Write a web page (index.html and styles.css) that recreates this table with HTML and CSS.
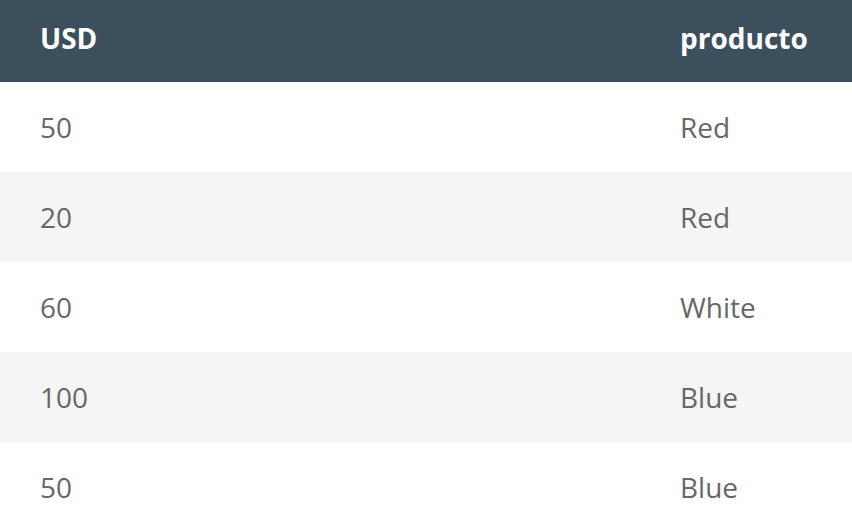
FILE: index.html
```html
<!DOCTYPE html>
<html lang="es">
<head>
<meta charset="utf-8">
<link rel="stylesheet" href="styles.css">
</head>
<body>
<table class="data">
  <thead>
    <tr><th class="c1">USD</th><th class="c2">producto</th></tr>
  </thead>
  <tbody>
    <tr><td>50</td><td>Red</td></tr>
    <tr><td>20</td><td>Red</td></tr>
    <tr><td>60</td><td>White</td></tr>
    <tr><td>100</td><td>Blue</td></tr>
    <tr><td>50</td><td>Blue</td></tr>
  </tbody>
</table>
</body>
</html>
```
FILE: styles.css
```css
html, body {
  margin: 0;
  padding: 0;
  background: #ffffff;
}
body {
  font-family: "Open Sans", "Liberation Sans", sans-serif;
}
.data {
  width: 852px;
  border-collapse: collapse;
  table-layout: fixed;
}
.data th {
  background: #3c4f5c;
  color: #ffffff;
  font-weight: 700;
  font-size: 28px;
  text-align: left;
  height: 82px;
  padding: 0 0 6px 40px;
  box-sizing: border-box;
}
.data .c1 { width: 640px; }
.data td {
  color: #676767;
  font-size: 28px;
  height: 90px;
  padding: 0 0 0 40px;
  box-sizing: border-box;
}
.data tbody tr:nth-child(even) td {
  background: #f5f5f5;
}
```
